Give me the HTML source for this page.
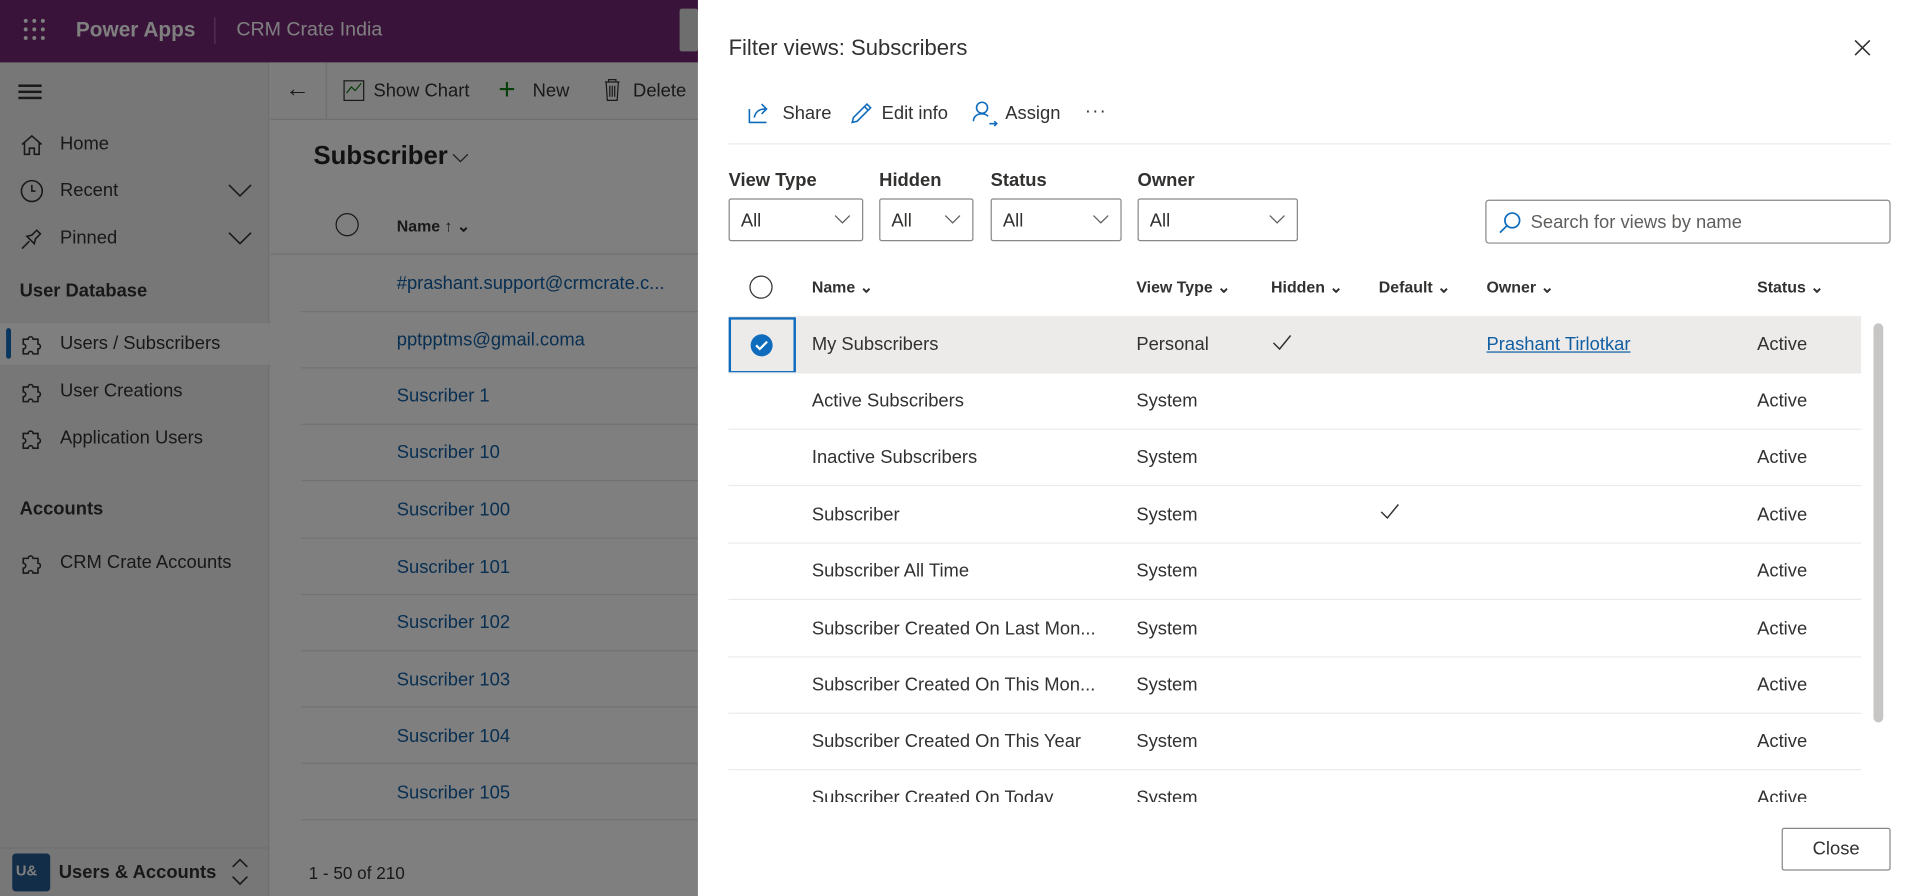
<!DOCTYPE html>
<html><head><meta charset="utf-8"><style>
*{box-sizing:border-box;margin:0;padding:0}
body{width:1920px;height:896px;overflow:hidden;background:#fff;font-family:"Liberation Sans",sans-serif;}
#w{position:absolute;left:0;top:0;width:1568px;height:732px;transform:scale(1.22449);transform-origin:0 0;overflow:hidden}
.a{position:absolute;white-space:nowrap}
.t{font-size:15px;color:#323130}
.lk{color:#115ea3;font-size:15px}
.h{font-size:13px;color:#323130;font-weight:bold}
.dd{position:absolute;top:162px;height:35px;border:1px solid #8a8886;border-radius:2px;font-size:15px;color:#323130;padding:9px 0 0 9px}
.dd svg{position:absolute;right:9px;top:12px}
.sep{position:absolute;left:595px;width:925px;height:1px;background:#edebe9}
</style></head><body><div id="w">
<div class="a" style="left:0;top:0;width:570px;height:51px;background:#742774"></div>
<svg class="a" style="left:18px;top:14px" width="20" height="20"><g fill="#fff"><circle cx="3" cy="3" r="1.6"/><circle cx="10" cy="3" r="1.6"/><circle cx="17" cy="3" r="1.6"/><circle cx="3" cy="10" r="1.6"/><circle cx="10" cy="10" r="1.6"/><circle cx="17" cy="10" r="1.6"/><circle cx="3" cy="17" r="1.6"/><circle cx="10" cy="17" r="1.6"/><circle cx="17" cy="17" r="1.6"/></g></svg>
<div class="a" style="left:62px;top:15px;color:#fff;font-size:17px;font-weight:bold">Power Apps</div>
<div class="a" style="left:175px;top:14px;width:1px;height:22px;background:#a86aa8"></div>
<div class="a" style="left:193px;top:16px;color:#fff;font-size:16px">CRM Crate India</div>
<div class="a" style="left:555px;top:7px;width:15px;height:35px;background:#ddd;border-radius:2px"></div>
<div class="a" style="left:0;top:51px;width:220px;height:681px;background:#efefef;border-right:1px solid #ddd"></div>
<div class="a" style="left:15px;top:69px;width:19px;height:2px;background:#333;box-shadow:0 5px 0 #333,0 10px 0 #333"></div>
<div class="a t" style="left:49px;top:109px">Home</div>
<div class="a t" style="left:49px;top:147px">Recent</div>
<div class="a t" style="left:49px;top:186px">Pinned</div>
<svg class="a" style="left:16px;top:108px" width="20" height="20" fill="none" stroke="#333" stroke-width="1.3"><path d="M2 10L10 3l8 7M4 8v10h4v-5h4v5h4V8"/></svg>
<svg class="a" style="left:16px;top:146px" width="20" height="20" fill="none" stroke="#333" stroke-width="1.3"><circle cx="10" cy="10" r="8.5"/><path d="M10 5v5h3"/></svg>
<svg class="a" style="left:16px;top:185px" width="20" height="20" fill="none" stroke="#333" stroke-width="1.3"><path d="M2 18l6-6M6 8l6 6 1-4 4-4-3-3-4 4z"/></svg>
<svg class="a" style="left:186px;top:150px" width="20" height="12" fill="none" stroke="#333" stroke-width="1.3"><path d="M1 1l9 9 9-9"/></svg>
<svg class="a" style="left:186px;top:189px" width="20" height="12" fill="none" stroke="#333" stroke-width="1.3"><path d="M1 1l9 9 9-9"/></svg>
<div class="a" style="left:16px;top:229px;font-size:15px;font-weight:bold;color:#323130">User Database</div>
<div class="a" style="left:0;top:264px;width:220px;height:34px;background:#fff"></div>
<div class="a" style="left:5px;top:268px;width:4px;height:25px;background:#0f6cbd;border-radius:2px"></div>
<div class="a t" style="left:49px;top:272px">Users / Subscribers</div>
<div class="a t" style="left:49px;top:311px">User Creations</div>
<div class="a t" style="left:49px;top:349px">Application Users</div>
<div class="a" style="left:16px;top:407px;font-size:15px;font-weight:bold;color:#323130">Accounts</div>
<div class="a t" style="left:49px;top:451px">CRM Crate Accounts</div>
<svg class="a" style="left:16px;top:271px" width="20" height="20" fill="none" stroke="#333" stroke-width="1.3"><path d="M3 6h4a2 2 0 014 0h4v4a2 2 0 010 4v4h-4a2 2 0 00-4 0H3v-4a2 2 0 000-4z"/></svg>
<svg class="a" style="left:16px;top:310px" width="20" height="20" fill="none" stroke="#333" stroke-width="1.3"><path d="M3 6h4a2 2 0 014 0h4v4a2 2 0 010 4v4h-4a2 2 0 00-4 0H3v-4a2 2 0 000-4z"/></svg>
<svg class="a" style="left:16px;top:348px" width="20" height="20" fill="none" stroke="#333" stroke-width="1.3"><path d="M3 6h4a2 2 0 014 0h4v4a2 2 0 010 4v4h-4a2 2 0 00-4 0H3v-4a2 2 0 000-4z"/></svg>
<svg class="a" style="left:16px;top:450px" width="20" height="20" fill="none" stroke="#333" stroke-width="1.3"><path d="M3 6h4a2 2 0 014 0h4v4a2 2 0 010 4v4h-4a2 2 0 00-4 0H3v-4a2 2 0 000-4z"/></svg>
<div class="a" style="left:0;top:692px;width:220px;height:1px;background:#ddd"></div>
<div class="a" style="left:10px;top:697px;width:31px;height:31px;background:#245a8f;border-radius:3px;color:#fff;font-size:12px;font-weight:bold;padding:7px 0 0 3px">U&amp;</div>
<div class="a" style="left:48px;top:704px;font-size:15px;font-weight:bold;color:#323130">Users &amp; Accounts</div>
<svg class="a" style="left:188px;top:700px" width="16" height="24" fill="none" stroke="#333" stroke-width="1.3"><path d="M2 8l6-6 6 6M2 16l6 6 6-6"/></svg>
<div class="a" style="left:221px;top:51px;width:349px;height:681px;background:#fff"></div>
<div class="a" style="left:221px;top:51px;width:349px;height:47px;background:#f8f8f8;border-bottom:1px solid #ddd"></div>
<div class="a" style="left:266px;top:51px;width:1px;height:47px;background:#ddd"></div>
<div class="a" style="left:233px;top:62px;font-size:20px;color:#333">←</div>
<svg class="a" style="left:280px;top:65px" width="18" height="18" fill="none" stroke="#333"><rect x="1" y="1" width="16" height="16"/><path d="M3 11l4-5 3 3 5-6" stroke="#107c10"/></svg>
<div class="a t" style="left:305px;top:66px">Show Chart</div>
<div class="a" style="left:407px;top:60px;font-size:24px;color:#107c10;font-weight:300">+</div>
<div class="a t" style="left:435px;top:66px">New</div>
<svg class="a" style="left:493px;top:64px" width="14" height="19" fill="none" stroke="#333"><path d="M1 3h12M4 3V1h6v2M2 3l1 15h8l1-15M5 6v9M7 6v9M9 6v9"/></svg>
<div class="a t" style="left:517px;top:66px">Delete</div>
<div class="a" style="left:256px;top:116px;font-size:21px;font-weight:bold;color:#242424">Subscriber</div>
<svg class="a" style="left:369px;top:125px" width="14" height="9" fill="none" stroke="#333"><path d="M1 1l6 6 6-6"/></svg>
<div class="a" style="left:274px;top:174px;width:19px;height:19px;border:1.3px solid #333;border-radius:50%"></div>
<div class="a" style="left:324px;top:177px;font-size:13px;font-weight:bold;color:#333">Name ↑ ⌄</div>
<div class="a" style="left:221px;top:207px;width:349px;height:1px;background:#ddd"></div>
<div class="a lk" style="left:324px;top:223px">#prashant.support@crmcrate.c...</div>
<div class="a lk" style="left:324px;top:269px">pptpptms@gmail.coma</div>
<div class="a lk" style="left:324px;top:315px">Suscriber 1</div>
<div class="a lk" style="left:324px;top:361px">Suscriber 10</div>
<div class="a lk" style="left:324px;top:408px">Suscriber 100</div>
<div class="a lk" style="left:324px;top:455px">Suscriber 101</div>
<div class="a lk" style="left:324px;top:500px">Suscriber 102</div>
<div class="a lk" style="left:324px;top:547px">Suscriber 103</div>
<div class="a lk" style="left:324px;top:593px">Suscriber 104</div>
<div class="a lk" style="left:324px;top:639px">Suscriber 105</div>
<div class="a" style="left:246px;top:254px;width:324px;height:1px;background:#e4e4e4;box-shadow:0 46px 0 #e4e4e4,0 92px 0 #e4e4e4,0 138px 0 #e4e4e4,0 185px 0 #e4e4e4,0 231px 0 #e4e4e4,0 277px 0 #e4e4e4,0 323px 0 #e4e4e4,0 369px 0 #e4e4e4,0 415px 0 #e4e4e4"></div>
<div class="a" style="left:252px;top:705px;font-size:14px;color:#333">1 - 50 of 210</div>
<div class="a" style="left:0;top:0;width:570px;height:732px;background:rgba(0,0,0,.5)"></div>

<div class="a" style="left:570px;top:0;width:998px;height:732px;background:#fff"></div>
<div class="a" style="left:595px;top:29px;font-size:18px;color:#323130">Filter views: Subscribers</div>
<svg class="a" style="left:1514px;top:32px" width="14" height="14" stroke="#323130" stroke-width="1.3"><path d="M1 1l12 12M13 1L1 13"/></svg>
<svg class="a" style="left:610px;top:82px" width="20" height="20" fill="none" stroke="#0f6cbd" stroke-width="1.3"><path d="M2 7v11h14M6 14c1-5 4-7 9-7M12 3l4 4-4 4"/></svg>
<div class="a t" style="left:639px;top:84px">Share</div>
<svg class="a" style="left:694px;top:82px" width="20" height="20" fill="none" stroke="#0f6cbd" stroke-width="1.3"><path d="M2 18l1-4L14 3l3 3L6 17z M12 5l3 3"/></svg>
<div class="a t" style="left:720px;top:84px">Edit info</div>
<svg class="a" style="left:794px;top:82px" width="22" height="22" fill="none" stroke="#0f6cbd" stroke-width="1.3"><circle cx="8" cy="6" r="4.5"/><path d="M1 17c0-4 3-6 7-6 2 0 4 1 5 2M14 19h6M18 17l2 2-2 2"/></svg>
<div class="a t" style="left:821px;top:84px">Assign</div>
<div class="a" style="left:886px;top:82px;font-size:15px;color:#323130;letter-spacing:1px">···</div>
<div class="a" style="left:595px;top:117px;width:949px;height:1px;background:#edebe9"></div>
<div class="a" style="left:595px;top:139px;font-size:15px;color:#323130;font-weight:bold">View Type</div>
<div class="a" style="left:718px;top:139px;font-size:15px;color:#323130;font-weight:bold">Hidden</div>
<div class="a" style="left:809px;top:139px;font-size:15px;color:#323130;font-weight:bold">Status</div>
<div class="a" style="left:929px;top:139px;font-size:15px;color:#323130;font-weight:bold">Owner</div>
<div class="dd" style="left:595px;width:110px">All<svg width="14" height="8" fill="none" stroke="#605e5c"><path d="M1 1l6 6 6-6"/></svg></div>
<div class="dd" style="left:718px;width:77px">All<svg width="14" height="8" fill="none" stroke="#605e5c"><path d="M1 1l6 6 6-6"/></svg></div>
<div class="dd" style="left:809px;width:107px">All<svg width="14" height="8" fill="none" stroke="#605e5c"><path d="M1 1l6 6 6-6"/></svg></div>
<div class="dd" style="left:929px;width:131px">All<svg width="14" height="8" fill="none" stroke="#605e5c"><path d="M1 1l6 6 6-6"/></svg></div>
<div class="a" style="left:1213px;top:163px;width:331px;height:36px;border:1px solid #8a8886;border-radius:3px"></div>
<svg class="a" style="left:1223px;top:172px" width="20" height="20" fill="none" stroke="#0f6cbd" stroke-width="1.4"><circle cx="12" cy="8" r="6"/><path d="M8 12l-6 6"/></svg>
<div class="a" style="left:1250px;top:173px;font-size:15px;color:#605e5c">Search for views by name</div>

<div class="a" style="left:612px;top:225px;width:19px;height:19px;border:1.3px solid #323130;border-radius:50%"></div>
<div class="a h" style="left:663px;top:227px">Name ⌄</div>
<div class="a h" style="left:928px;top:227px">View Type ⌄</div>
<div class="a h" style="left:1038px;top:227px">Hidden ⌄</div>
<div class="a h" style="left:1126px;top:227px">Default ⌄</div>
<div class="a h" style="left:1214px;top:227px">Owner ⌄</div>
<div class="a h" style="left:1435px;top:227px">Status ⌄</div>
<div class="sep" style="top:258px"></div>
<div class="a" style="left:595px;top:259px;width:925px;height:396px;overflow:hidden">
 <div class="a" style="left:0;top:0;width:925px;height:46px;background:#edebe9"></div>
 <div class="a" style="left:0;top:0;width:55px;height:46px;border:2px solid #0f6cbd"></div>
 <svg class="a" style="left:17px;top:13px" width="20" height="20"><circle cx="10" cy="10" r="9" fill="#0f6cbd"/><path d="M5.5 10l3 3 6-6" fill="none" stroke="#fff" stroke-width="1.8"/></svg>
</div>
<div class="a t" style="left:663px;top:273px">My Subscribers</div><div class="a t" style="left:928px;top:273px">Personal</div><div class="a t" style="left:1214px;top:273px;color:#115ea3;text-decoration:underline">Prashant Tirlotkar</div><div class="a t" style="left:1435px;top:273px">Active</div>
<svg class="a" style="left:1039px;top:273px" width="16" height="14" fill="none" stroke="#323130" stroke-width="1.2"><path d="M1 7l5 5 9-11"/></svg>
<div class="sep" style="top:304px"></div>
<div class="a t" style="left:663px;top:319px">Active Subscribers</div><div class="a t" style="left:928px;top:319px">System</div><div class="a t" style="left:1435px;top:319px">Active</div>
<div class="sep" style="top:350px"></div>
<div class="a t" style="left:663px;top:365px">Inactive Subscribers</div><div class="a t" style="left:928px;top:365px">System</div><div class="a t" style="left:1435px;top:365px">Active</div>
<div class="sep" style="top:396px"></div>
<div class="a t" style="left:663px;top:412px">Subscriber</div><div class="a t" style="left:928px;top:412px">System</div><div class="a t" style="left:1435px;top:412px">Active</div>
<svg class="a" style="left:1127px;top:411px" width="16" height="14" fill="none" stroke="#323130" stroke-width="1.2"><path d="M1 7l5 5 9-11"/></svg>
<div class="sep" style="top:443px"></div>
<div class="a t" style="left:663px;top:458px">Subscriber All Time</div><div class="a t" style="left:928px;top:458px">System</div><div class="a t" style="left:1435px;top:458px">Active</div>
<div class="sep" style="top:489px"></div>
<div class="a t" style="left:663px;top:505px">Subscriber Created On Last Mon...</div><div class="a t" style="left:928px;top:505px">System</div><div class="a t" style="left:1435px;top:505px">Active</div>
<div class="sep" style="top:536px"></div>
<div class="a t" style="left:663px;top:551px">Subscriber Created On This Mon...</div><div class="a t" style="left:928px;top:551px">System</div><div class="a t" style="left:1435px;top:551px">Active</div>
<div class="sep" style="top:582px"></div>
<div class="a t" style="left:663px;top:597px">Subscriber Created On This Year</div><div class="a t" style="left:928px;top:597px">System</div><div class="a t" style="left:1435px;top:597px">Active</div>
<div class="sep" style="top:628px"></div>
<div class="a" style="left:595px;top:629px;width:925px;height:26px;overflow:hidden">
 <div class="a t" style="left:68px;top:14px">Subscriber Created On Today</div><div class="a t" style="left:333px;top:14px">System</div><div class="a t" style="left:840px;top:14px">Active</div>
</div>
<div class="a" style="left:1530px;top:264px;width:8px;height:326px;background:#c8c6c4;border-radius:4px"></div>
<div class="a" style="left:1455px;top:676px;width:89px;height:35px;border:1px solid #8a8886;border-radius:2px;font-size:15px;color:#323130;text-align:center;padding-top:8px">Close</div>
</div></body></html>
